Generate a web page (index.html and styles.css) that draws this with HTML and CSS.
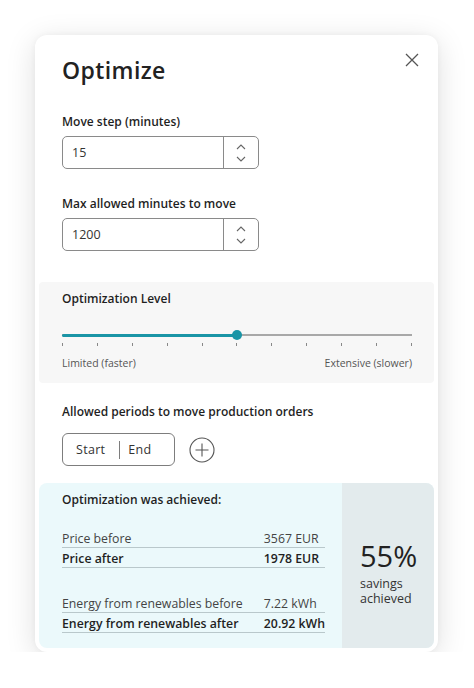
FILE: index.html
```html
<!DOCTYPE html>
<html lang="en">
<head>
<meta charset="utf-8">
<title>Optimize</title>
<link rel="stylesheet" href="styles.css">
</head>
<body>
<div class="card">
  <div class="sec header">
    <h1 class="title">Optimize</h1>
    <button class="close" aria-label="Close">
      <svg width="14" height="14" viewBox="0 0 14 14"><path d="M1 1 L13 13 M13 1 L1 13" stroke="#555" stroke-width="1.3" fill="none"/></svg>
    </button>
  </div>

  <div class="sec field first">
    <div class="label">Move step (minutes)</div>
    <div class="input">
      <div class="value">15</div>
      <div class="stepper">
        <svg width="10" height="6" viewBox="0 0 10 6"><polyline points="1,5 5,1 9,5" stroke="#666" stroke-width="1.1" fill="none"/></svg>
        <svg width="10" height="6" viewBox="0 0 10 6"><polyline points="1,1 5,5 9,1" stroke="#666" stroke-width="1.1" fill="none"/></svg>
      </div>
    </div>
  </div>

  <div class="sec field second">
    <div class="label">Max allowed minutes to move</div>
    <div class="input">
      <div class="value">1200</div>
      <div class="stepper">
        <svg width="10" height="6" viewBox="0 0 10 6"><polyline points="1,5 5,1 9,5" stroke="#666" stroke-width="1.1" fill="none"/></svg>
        <svg width="10" height="6" viewBox="0 0 10 6"><polyline points="1,1 5,5 9,1" stroke="#666" stroke-width="1.1" fill="none"/></svg>
      </div>
    </div>
  </div>

  <div class="sec level">
    <div class="label">Optimization Level</div>
    <div class="slider">
      <div class="track"></div>
      <div class="fill" style="width:50%"></div>
      <div class="thumb" style="left:50%"></div>
    </div>
    <div class="ticks">
      <i></i><i></i><i></i><i></i><i></i><i></i><i></i><i></i><i></i><i></i><i></i>
    </div>
    <div class="range-labels">
      <span>Limited (faster)</span>
      <span>Extensive (slower)</span>
    </div>
  </div>

  <div class="sec periods">
    <div class="label">Allowed periods to move production orders</div>
    <div class="period-row">
      <div class="period">
        <span class="p-start">Start</span>
        <span class="p-div"></span>
        <span class="p-end">End</span>
      </div>
      <button class="add" aria-label="Add period">
        <svg width="26" height="26" viewBox="0 0 26 26"><circle cx="13" cy="13" r="12" stroke="#555" stroke-width="1.1" fill="none"/><path d="M6.5 13 H19.5 M13 6.5 V19.5" stroke="#555" stroke-width="1.1"/></svg>
      </button>
    </div>
  </div>

  <div class="result">
    <div class="result-main">
      <div class="label">Optimization was achieved:</div>
      <table class="stats">
        <tr class="row"><td>Price before</td><td class="num">3567 EUR</td></tr>
        <tr class="row strong"><td>Price after</td><td class="num">1978 EUR</td></tr>
        <tr class="spacer"><td colspan="2"></td></tr>
        <tr class="row"><td>Energy from renewables before</td><td class="num">7.22 kWh</td></tr>
        <tr class="row strong"><td>Energy from renewables after</td><td class="num">20.92 kWh</td></tr>
      </table>
    </div>
    <div class="result-side">
      <div class="pct">55%</div>
      <div class="pct-text">savings<br>achieved</div>
    </div>
  </div>
</div>
</body>
</html>
```

FILE: styles.css
```css
* { box-sizing: border-box; }

body {
  margin: 0;
  background: #ffffff;
  font-family: "Open Sans", "Noto Sans", sans-serif;
  color: #1f1f1f;
}

.card {
  margin: 35px 0 0 35px;
  width: 403px;
  padding: 21px 4px 4px;
  background: #ffffff;
  border-radius: 12px;
  box-shadow: 0 6px 30px rgba(0, 0, 0, 0.13), 0 0 6px rgba(0, 0, 0, 0.04);
}

.sec {
  padding: 0 22px 0 23px;
}

.header {
  display: flex;
  justify-content: space-between;
  align-items: flex-start;
}

.title {
  margin: 0;
  font-size: 23px;
  line-height: 28px;
  font-weight: 600;
  color: #222;
  letter-spacing: 0.4px;
}

.close {
  margin: -3px -7px 0 0;
  padding: 0;
  border: 0;
  background: none;
  width: 14px;
  height: 14px;
  display: block;
}
.close svg { display: block; }

.label {
  font-size: 12px;
  line-height: 18px;
  font-weight: 600;
  color: #1f1f1f;
}

.field.first { margin-top: 29px; }
.field.second { margin-top: 26px; }

.input {
  margin-top: 5px;
  width: 197px;
  height: 33px;
  border: 1.3px solid #8a8a8a;
  border-radius: 5px;
  display: flex;
  align-items: stretch;
}

.value {
  flex: 1;
  padding-left: 9px;
  display: flex;
  align-items: center;
  font-size: 12.5px;
  color: #333;
}

.stepper {
  width: 35px;
  border-left: 1.3px solid #8a8a8a;
  display: flex;
  flex-direction: column;
  align-items: center;
  justify-content: center;
  gap: 6px;
}
.stepper svg { display: block; }

.level {
  margin-top: 31px;
  background: #f7f7f7;
  border-radius: 4px;
  padding-top: 8px;
  padding-bottom: 12px;
}

.slider {
  position: relative;
  margin-top: 21px;
  height: 12px;
}
.track {
  position: absolute;
  left: 0;
  right: 0;
  top: 5px;
  height: 1.5px;
  background: #a8a8a8;
}
.fill {
  position: absolute;
  left: 0;
  top: 4.5px;
  height: 3px;
  background: #1a95a6;
  border-radius: 2px;
}
.thumb {
  position: absolute;
  top: 1px;
  width: 10px;
  height: 10px;
  margin-left: -5px;
  border-radius: 50%;
  background: #1a95a6;
}

.ticks {
  margin-top: 2px;
  display: flex;
  justify-content: space-between;
}
.ticks i {
  display: block;
  width: 1px;
  height: 3px;
  background: #888;
}

.range-labels {
  margin-top: 10px;
  display: flex;
  justify-content: space-between;
  font-size: 10.5px;
  line-height: 15px;
  color: #555;
}

.periods { margin-top: 20px; }

.period-row {
  margin-top: 12px;
  display: flex;
  align-items: center;
}

.period {
  width: 113px;
  height: 33px;
  border: 1.3px solid #7d7d7d;
  border-radius: 6px;
  display: flex;
  align-items: center;
  font-size: 12.5px;
  color: #333;
  letter-spacing: 0.3px;
}
.p-start {
  width: 56px;
  padding-left: 13px;
}
.p-div {
  width: 1.3px;
  height: 18px;
  background: #7d7d7d;
}
.p-end {
  padding-left: 8px;
}

.add {
  margin-left: 14px;
  padding: 0;
  border: 0;
  background: none;
  width: 26px;
  height: 26px;
}
.add svg { display: block; }

.result {
  margin-top: 17px;
  display: flex;
  height: 165px;
  border-radius: 8px;
  overflow: hidden;
  background: #ebf9fb;
}

.result-main {
  flex: 1;
  padding: 8px 17px 0 23px;
}

.stats {
  margin-top: 19px;
  width: 100%;
  border-collapse: collapse;
  font-size: 12.3px;
  line-height: 15px;
  color: #444;
}
.stats td {
  padding: 3px 0 1px;
  white-space: nowrap;
}
.stats .num {
  width: 1%;
  padding-left: 10px;
}
.stats .row td {
  border-bottom: 1.5px solid #b9c8cb;
}
.stats .strong td {
  font-weight: 600;
  color: #1f1f1f;
}
.stats .spacer td {
  height: 25px;
  padding: 0;
}

.result-side {
  width: 92px;
  background: #e3ebed;
  padding: 54px 0 0 18px;
}
.pct {
  font-size: 29px;
  line-height: 38px;
  color: #222;
}
.pct-text {
  margin-top: 1px;
  font-size: 12.5px;
  line-height: 15px;
  color: #333;
}
```
